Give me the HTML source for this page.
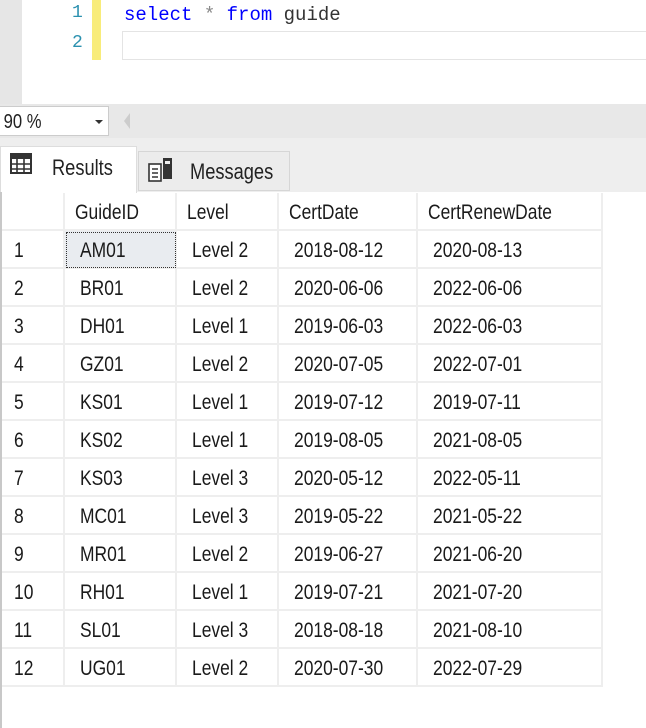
<!DOCTYPE html>
<html><head><style>
body{margin:0;width:646px;height:728px;overflow:hidden;background:#fff;font-family:"Liberation Sans",sans-serif;position:relative}
.a{position:absolute}
.t{display:inline-block;transform:scaleX(.83);transform-origin:left center;white-space:nowrap}
.row{position:absolute;left:0;height:38px;width:604px}
.c{position:absolute;top:0;height:36px;line-height:40px;font-size:21px;color:#1a1a1a;border-right:2px solid #eee;border-bottom:2px solid #eee;box-sizing:content-box;overflow:hidden}
</style></head><body>
<div class="a" style="left:0;top:0;width:22px;height:104px;background:#e6e6e6"></div>
<div class="a" style="left:92px;top:0;width:9px;height:60px;background:#f8ec7a"></div>
<div class="a" style="left:72px;top:3px;font:18px 'Liberation Mono',monospace;color:#2b91af">1</div>
<div class="a" style="left:72px;top:33px;font:18px 'Liberation Mono',monospace;color:#2b91af">2</div>
<div class="a" style="left:124px;top:4px;font:19px 'Liberation Mono',monospace;color:#333;white-space:pre"><span style="color:#0000ff">select</span> <span style="color:#888">*</span> <span style="color:#0000ff">from</span> guide</div>
<div class="a" style="left:122px;top:31px;width:530px;height:27px;border:1px solid #e4e4e4"></div>
<div class="a" style="left:0;top:104px;width:646px;height:34px;background:#e8e8e8"></div>
<div class="a" style="left:-2px;top:106px;width:111px;height:30px;background:#fff;border:1px solid #ccc;box-sizing:border-box;font-size:20px;line-height:30px;color:#222"><span class="t">&nbsp;90 %</span></div>
<div class="a" style="left:95px;top:120px;width:0;height:0;border-left:4px solid transparent;border-right:4px solid transparent;border-top:4px solid #333"></div>
<div class="a" style="left:124px;top:113px;width:0;height:0;border-top:8px solid transparent;border-bottom:8px solid transparent;border-right:6px solid #ccc"></div>
<div class="a" style="left:0;top:138px;width:646px;height:54px;background:#eeeeee"></div>
<div class="a" style="left:0;top:146px;width:137px;height:47px;background:#fff;border:1px solid #ddd;border-bottom:none;box-sizing:border-box"></div>
<svg class="a" style="left:10px;top:153px" width="22" height="22" viewBox="0 0 22 22"><rect x="1" y="1" width="20" height="19" fill="#fff" stroke="#333" stroke-width="2"/><rect x="1" y="1" width="20" height="5" fill="#333"/><path d="M1 11H21M1 16H21M7 6V20M14 6V20" stroke="#333" stroke-width="1.6"/></svg>
<div class="a" style="left:52px;top:155px;font-size:22px;color:#222"><span class="t">Results</span></div>
<div class="a" style="left:138px;top:151px;width:152px;height:40px;background:#ececec;border:1px solid #d6d6d6;box-sizing:border-box"></div>
<svg class="a" style="left:148px;top:156px" width="30" height="28" viewBox="0 0 30 28"><rect x="1" y="8" width="12" height="17" fill="#fff" stroke="#333" stroke-width="1.6"/><path d="M4 13H10M4 17H10M4 21H10" stroke="#333" stroke-width="1.4"/><rect x="15" y="2" width="9" height="21" fill="#333"/><rect x="17" y="5" width="5" height="3" fill="#eee"/></svg>
<div class="a" style="left:190px;top:159px;font-size:22px;color:#222"><span class="t">Messages</span></div>
<div class="a" style="left:0;top:192px;width:2px;height:536px;background:#c8c8c8"></div>
<div id="g"></div>
<script>
var rows=[["","GuideID","Level","CertDate","CertRenewDate"],
["1","AM01","Level 2","2018-08-12","2020-08-13"],["2","BR01","Level 2","2020-06-06","2022-06-06"],["3","DH01","Level 1","2019-06-03","2022-06-03"],["4","GZ01","Level 2","2020-07-05","2022-07-01"],["5","KS01","Level 1","2019-07-12","2019-07-11"],["6","KS02","Level 1","2019-08-05","2021-08-05"],["7","KS03","Level 3","2020-05-12","2022-05-11"],["8","MC01","Level 3","2019-05-22","2021-05-22"],["9","MR01","Level 2","2019-06-27","2021-06-20"],["10","RH01","Level 1","2019-07-21","2021-07-20"],["11","SL01","Level 3","2018-08-18","2021-08-10"],["12","UG01","Level 2","2020-07-30","2022-07-29"]];
var xs=[2,65,177,279,418],ws=[61,110,100,137,183];
var h="";
rows.forEach(function(r,i){
 var top=193+i*38;var pad=i==0?10:15;
 h+='<div class="row" style="top:'+top+'px">';
 r.forEach(function(v,j){
  var p=j==0?12:pad;
  var st='left:'+xs[j]+'px;width:'+(ws[j]-p)+'px;padding-left:'+p+'px;';
  if(i==1&&j==1)st+='background:#e9ecf0;outline:1px dotted #333;outline-offset:-2px;';
  h+='<div class="c" style="'+st+'"><span class="t">'+v+'</span></div>';
 });
 h+='</div>';
});
document.getElementById("g").innerHTML=h;
</script>
</body></html>
